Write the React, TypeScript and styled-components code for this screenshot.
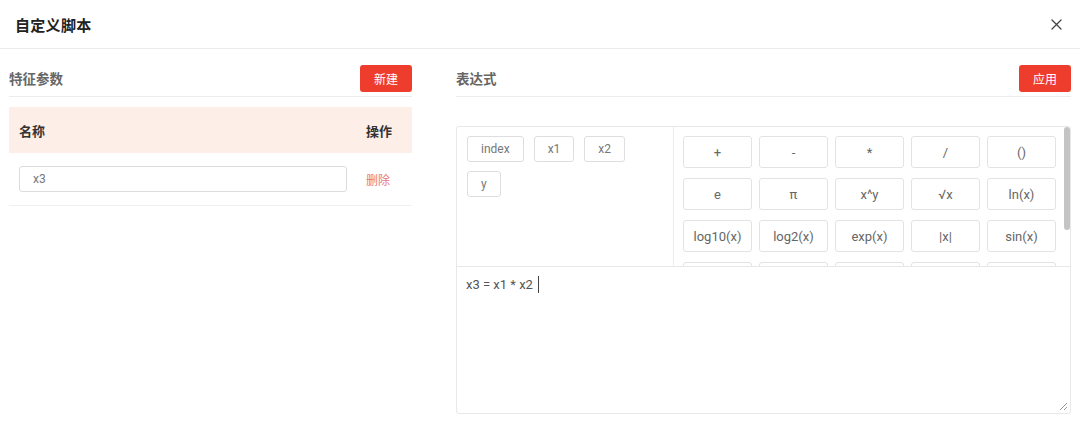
import React from "react";
import styled, { createGlobalStyle } from "styled-components";

const Global = createGlobalStyle`
  html, body { margin: 0; padding: 0; background: #fff; }
  body { font-family: "Noto Sans CJK SC", Roboto, sans-serif; color: #333; }
  * { box-sizing: border-box; }
`;

const Page = styled.div`
  width: 1080px;
  height: 437px;
  background: #fff;
  display: flex;
  flex-direction: column;
`;

const Header = styled.div`
  height: 49px;
  border-bottom: 1px solid #ebebeb;
  display: flex;
  align-items: center;
  justify-content: space-between;
  padding: 0 17px 0 15px;
`;

const Title = styled.div`
  font-family: "Noto Sans CJK SC", sans-serif;
  font-size: 15px;
  font-weight: 700;
  color: #222;
  letter-spacing: 0.3px;
`;

const CloseBtn = styled.button`
  border: none;
  background: none;
  padding: 0;
  width: 13px;
  height: 13px;
  display: flex;
  align-items: center;
  justify-content: center;
  cursor: pointer;
`;

const Body = styled.div`
  display: flex;
  gap: 44px;
  padding: 16px 9px 0 9px;
`;

const LeftPanel = styled.div`
  width: 403px;
  display: flex;
  flex-direction: column;
`;

const RightPanel = styled.div`
  flex: 1;
  display: flex;
  flex-direction: column;
`;

const SectionHead = styled.div`
  height: 32px;
  display: flex;
  align-items: flex-start;
  justify-content: space-between;
  border-bottom: 1px solid #ececec;
`;

const SectionTitle = styled.div`
  font-size: 13.5px;
  font-weight: 700;
  color: #666;
  line-height: 27px;
`;

const PrimaryButton = styled.button`
  width: 52px;
  height: 27px;
  border: none;
  border-radius: 3px;
  background: #ee3d2c;
  color: #fff;
  font-family: "Noto Sans CJK SC", sans-serif;
  font-size: 12px;
  padding: 0;
  cursor: pointer;
`;

const Table = styled.div`
  margin-top: 10px;
  display: flex;
  flex-direction: column;
`;

const Row = styled.div<{ $head?: boolean }>`
  display: grid;
  grid-template-columns: 347px 1fr;
  align-items: center;
  height: ${(p) => (p.$head ? "46px" : "53px")};
  background: ${(p) => (p.$head ? "#fdeee8" : "#fff")};
  border-bottom: ${(p) => (p.$head ? "none" : "1px solid #f0f0f0")};
`;

const Cell = styled.div<{ $head?: boolean }>`
  padding-left: 10px;
  font-size: 13px;
  font-weight: ${(p) => (p.$head ? 700 : 400)};
  color: ${(p) => (p.$head ? "#333" : "#666")};
`;

const NameInput = styled.input`
  width: 328px;
  height: 26px;
  border: 1px solid #dcdcdc;
  border-radius: 3px;
  padding: 0 13px;
  font-family: Roboto, "Noto Sans CJK SC", sans-serif;
  font-size: 12px;
  color: #777;
  outline: none;
`;

const DeleteLink = styled.span`
  font-size: 12px;
  color: #e8777a;
  cursor: pointer;
`;

const ExprBox = styled.div`
  margin-top: 29px;
  height: 288px;
  border: 1px solid #e8e8e8;
  border-radius: 3px;
  display: flex;
  flex-direction: column;
  overflow: hidden;
`;

const Palette = styled.div`
  height: 140px;
  display: flex;
  border-bottom: 1px solid #e8e8e8;
`;

const VarArea = styled.div`
  width: 217px;
  border-right: 1px solid #ececec;
  padding: 9px 10px;
  display: flex;
  flex-wrap: wrap;
  align-content: flex-start;
  gap: 9px 10px;
`;

const VarButton = styled.button`
  height: 26px;
  padding: 0 13px;
  border: 1px solid #dedede;
  border-radius: 3px;
  background: #fff;
  font-family: Roboto, sans-serif;
  font-size: 12px;
  color: #777;
  cursor: pointer;
`;

const OpArea = styled.div`
  flex: 1;
  overflow: hidden;
  padding: 9px 0 0 9px;
`;

const OpGrid = styled.div`
  display: grid;
  grid-template-columns: repeat(5, 69px);
  grid-auto-rows: 32px;
  gap: 10px 7px;
`;

const OpButton = styled.button`
  border: 1px solid #e3e3e3;
  border-radius: 3px;
  background: #fff;
  font-family: Roboto, "DejaVu Sans", sans-serif;
  font-size: 13px;
  color: #666;
  padding: 0;
  cursor: pointer;
`;

const ScrollTrack = styled.div`
  width: 6px;
  display: flex;
  flex-direction: column;
`;

const ScrollThumb = styled.div`
  height: 103px;
  border-radius: 3px;
  background: #c4c4c4;
`;

const Editor = styled.div`
  flex: 1;
  position: relative;
  padding: 9px 9px;
  font-family: Roboto, sans-serif;
  font-size: 13px;
  color: #555;
  line-height: 18px;
`;

const Caret = styled.span`
  display: inline-block;
  width: 1px;
  height: 17px;
  background: #444;
  vertical-align: -4px;
  margin-left: 5px;
`;

const Grip = styled.svg`
  position: absolute;
  right: 2px;
  bottom: 2px;
`;

const ops = [
  "+", "-", "*", "/", "()",
  "e", "π", "x^y", "√x", "ln(x)",
  "log10(x)", "log2(x)", "exp(x)", "|x|", "sin(x)",
  "cos(x)", "tan(x)", "asin(x)", "acos(x)", "atan(x)",
];

const vars = ["index", "x1", "x2", "y"];

export default function App() {
  return (
    <Page>
      <Global />
      <Header>
        <Title>自定义脚本</Title>
        <CloseBtn aria-label="close">
          <svg width="11" height="11" viewBox="0 0 11 11">
            <path d="M1 1L10 10M10 1L1 10" stroke="#444" strokeWidth="1.3" strokeLinecap="round" />
          </svg>
        </CloseBtn>
      </Header>
      <Body>
        <LeftPanel>
          <SectionHead>
            <SectionTitle>特征参数</SectionTitle>
            <PrimaryButton>新建</PrimaryButton>
          </SectionHead>
          <Table>
            <Row $head>
              <Cell $head>名称</Cell>
              <Cell $head>操作</Cell>
            </Row>
            <Row>
              <Cell>
                <NameInput defaultValue="x3" />
              </Cell>
              <Cell>
                <DeleteLink>删除</DeleteLink>
              </Cell>
            </Row>
          </Table>
        </LeftPanel>
        <RightPanel>
          <SectionHead>
            <SectionTitle>表达式</SectionTitle>
            <PrimaryButton>应用</PrimaryButton>
          </SectionHead>
          <ExprBox>
            <Palette>
              <VarArea>
                {vars.map((v) => (
                  <VarButton key={v}>{v}</VarButton>
                ))}
              </VarArea>
              <OpArea>
                <OpGrid>
                  {ops.map((o, i) => (
                    <OpButton key={o}>{i < 15 ? o : ""}</OpButton>
                  ))}
                </OpGrid>
              </OpArea>
              <ScrollTrack>
                <ScrollThumb />
              </ScrollTrack>
            </Palette>
            <Editor>
              x3 = x1 * x2<Caret />
              <Grip width="9" height="9" viewBox="0 0 9 9">
                <path d="M8 1L1 8M8 5L5 8" stroke="#999" strokeWidth="1" />
              </Grip>
            </Editor>
          </ExprBox>
        </RightPanel>
      </Body>
    </Page>
  );
}
